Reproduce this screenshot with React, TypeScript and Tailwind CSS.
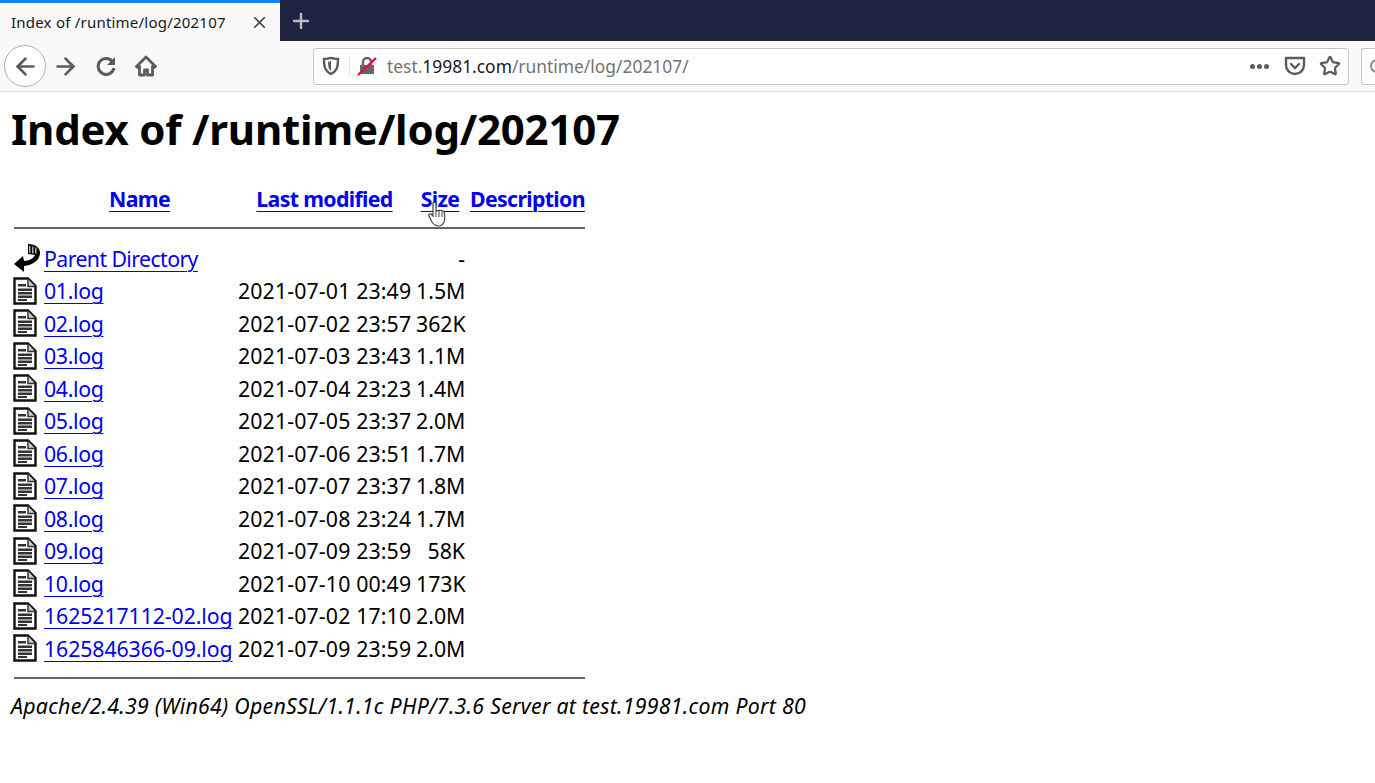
import { ArrowLeft, ArrowRight, Plus, Star, X } from "lucide-react";

const font = "[font-family:'Noto_Sans','Open_Sans',sans-serif]";

const files = [
  ["01.log", "2021-07-01 23:49", "1.5M"],
  ["02.log", "2021-07-02 23:57", "362K"],
  ["03.log", "2021-07-03 23:43", "1.1M"],
  ["04.log", "2021-07-04 23:23", "1.4M"],
  ["05.log", "2021-07-05 23:37", "2.0M"],
  ["06.log", "2021-07-06 23:51", "1.7M"],
  ["07.log", "2021-07-07 23:37", "1.8M"],
  ["08.log", "2021-07-08 23:24", "1.7M"],
  ["09.log", "2021-07-09 23:59", "58K"],
  ["10.log", "2021-07-10 00:49", "173K"],
  ["1625217112-02.log", "2021-07-02 17:10", "2.0M"],
  ["1625846366-09.log", "2021-07-09 23:59", "2.0M"],
];

function DocIcon() {
  return (
    <svg width="24" height="28" viewBox="0 0 24 28" className="-ml-[1px] block">
      <path d="M1.500 1.500H15L22.500 9V26.500H1.500Z" fill="#fff" stroke="#111" strokeWidth="2.400" />
      <path d="M15 2V9.500H22" fill="#ccc" stroke="#333" strokeWidth="1.500" />
      <path d="M5 7h8v2.500H5zM5 11.500h14v2.500H5zM5 15h14v2.500H5zM5 18.500h14v2.500H5zM5 22h9v2H5z" fill="#333" />
    </svg>
  );
}

function BackIcon() {
  return (
    <svg width="26" height="30" viewBox="0 0 26 30" className="block">
      <path
        d="M14 1C22 1 26 5 26 10C26 17 19 22 10 23L10 29L0 21L9 13L10 18C15 18 20 15 21 12L14 11Z"
        fill="#000"
      />
      <path d="M15 3h1.500v7H15zM18 3.500h1.500v7H18zM21 4.500h1.500v6H21z" fill="#aaa" />
    </svg>
  );
}

function Cursor() {
  return (
    <svg width="18" height="26" viewBox="0 0 18 26" className="absolute left-[428px] top-[201px]">
      <path
        d="M5 2c1-1 3-1 3 1v7c2-1 7-1 8 1s1 8 0 10-2 4-5 4-5-1-7-4l-3-6c-1-2 1-3 3-1l1 1z"
        fill="#fff"
        stroke="#444"
        strokeWidth="1.2"
      />
      <path d="M8 10v6M11 10v6M14 11v5" stroke="#444" strokeWidth="1" fill="none" />
    </svg>
  );
}

const headLink = "font-bold tracking-[-0.65px] text-[#0000ee] underline decoration-1 underline-offset-[4px]";
const rowLink = "text-[#0000ee] underline decoration-1 underline-offset-[4px]";

export default function App() {
  return (
    <div className={`relative h-[783px] w-[1375px] overflow-hidden bg-white text-black ${font}`}>
      {/* tab bar */}
      <div className="flex h-[41px] bg-[#202340]">
        <div className="flex w-[280px] flex-col bg-[#f9f9fa]">
          <div className="h-[3px] bg-[#0a84ff]" />
          <div className="flex flex-1 items-center justify-between pl-[11px] pr-[11px] text-[15px] tracking-[0.22px] text-[#18181a]">
            <span>Index of /runtime/log/202107</span>
            <X size={19} strokeWidth={2.2} className="text-[#444]" />
          </div>
        </div>
        <div className="flex items-center pl-[9px]">
          <Plus size={24} strokeWidth={2.4} className="text-[#b9bac6]" />
        </div>
      </div>

      {/* toolbar */}
      <div className="flex h-[51px] items-center border-b border-[#e0e0e2] bg-[#f9f9fa] pl-[4px] text-[#5b5b5e]">
        <div className="flex h-[42px] w-[42px] items-center justify-center rounded-full border border-[#b1b1b3] bg-white">
          <ArrowLeft size={27} strokeWidth={2.4} />
        </div>
        <ArrowRight size={27} strokeWidth={2.4} className="ml-[6px]" />
        <svg width="22" height="22" viewBox="0 0 22 22" className="ml-[16px]">
          <path d="M17.500 6.500A8 8 0 1 0 19 13" fill="none" stroke="currentColor" strokeWidth="3" />
          <path d="M20 2v8h-8z" fill="currentColor" />
        </svg>
        <svg width="22" height="22" viewBox="0 0 22 22" className="ml-[18px]">
          <path
            d="M11 2L1.500 11.500l1.500 1 1.500-1V20h5v-5h3v5h5v-8.500l1.500 1 1.500-1z"
            fill="none"
            stroke="currentColor"
            strokeWidth="2.800"
            strokeLinejoin="round"
          />
        </svg>

        <div className="ml-[156px] flex h-[37px] w-[1036px] items-center rounded-[3px] border border-[#c4c4c6] bg-white">
          <div className="flex w-[36px] items-center justify-center border-r border-[#e5e5e7]">
            <svg width="18" height="20" viewBox="0 0 18 20" className="-ml-[1px]">
              <path d="M2 3c4 0 5-1 7-1s3 1 7 1c0 8-1 12-7 15C3 15 2 11 2 3z" fill="none" stroke="currentColor" strokeWidth="2.400" />
              <path d="M9 5v10c-2-1-3-4-3-9z" fill="currentColor" />
            </svg>
          </div>
          <svg width="20" height="20" viewBox="0 0 20 20" className="ml-[7px]">
            <path d="M3 9h14v9H3z" fill="#666" />
            <path d="M6 9V6a4 4 0 0 1 8 0v3" fill="none" stroke="#666" strokeWidth="2.400" />
            <path d="M1 19L19 2" stroke="#ff0039" strokeWidth="2.400" />
          </svg>
          <div className="ml-[10px] flex-1 text-[17.4px] text-[#737373]">
            test.<span className="text-[#18181a]">19981.com</span>/runtime/log/202107/
          </div>
          <div className="mr-[15px] flex gap-[2px]">
            <span className="h-[5px] w-[5px] rounded-full bg-[#5b5b5e]" />
            <span className="h-[5px] w-[5px] rounded-full bg-[#5b5b5e]" />
            <span className="h-[5px] w-[5px] rounded-full bg-[#5b5b5e]" />
          </div>
          <svg width="22" height="20" viewBox="0 0 22 20">
            <path d="M2 2h18v7c0 5-4 9-9 9s-9-4-9-9z" fill="none" stroke="currentColor" strokeWidth="2.400" strokeLinejoin="round" />
            <path d="M7 8l4 4 4-4" fill="none" stroke="currentColor" strokeWidth="2.400" strokeLinecap="round" />
          </svg>
          <Star size={22} strokeWidth={2.4} className="ml-[13px] mr-[7px]" />
        </div>
        <div className="ml-[12px] flex h-[37px] flex-1 items-center overflow-hidden rounded-l-[3px] border border-r-0 border-[#c4c4c6] bg-white pl-[8px]">
          <span className="h-[14px] w-[14px] shrink-0 rounded-full border-2 border-[#8a8a8c]" />
        </div>
      </div>

      {/* directory listing */}
      <div className="px-[11px] pt-[8px]">
        <h1 className="mb-[23px] text-[42px] font-bold leading-[58px] tracking-[-0.22px]">Index of /runtime/log/202107</h1>
        <table className="w-[577px] table-fixed border-separate border-spacing-[3px] text-[21.3px] leading-[29px]">
          <colgroup>
            <col className="w-[27px]" />
            <col className="w-[191px]" />
            <col className="w-[175px]" />
            <col className="w-[51px]" />
            <col className="w-[115px]" />
          </colgroup>
          <thead>
            <tr>
              <th></th>
              <th className="pb-[3px] text-center">
                <a className={headLink}>Name</a>
              </th>
              <th className="pb-[3px] pr-[2px] text-center">
                <a className={headLink}>Last modified</a>
              </th>
              <th className="pb-[3px] pr-[3px] text-center">
                <a className={headLink}>Size</a>
              </th>
              <th className="whitespace-nowrap pb-[3px] text-left">
                <a className={headLink}>Description</a>
              </th>
            </tr>
            <tr>
              <th colSpan={5} className="pt-[8px] pb-[11px]">
                <div className="h-[2px] bg-[#666]" />
              </th>
            </tr>
          </thead>
          <tbody>
            <tr>
              <td className="h-[28.500px] align-middle">
                <BackIcon />
              </td>
              <td className="whitespace-nowrap">
                <a className={`${rowLink} tracking-[-0.6px]`}>Parent Directory</a>
              </td>
              <td></td>
              <td className="pr-[2px] text-right">-</td>
              <td></td>
            </tr>
            {files.map(([name, date, size]) => (
              <tr key={name}>
                <td className="h-[29.500px] align-middle">
                  <DocIcon />
                </td>
                <td className="whitespace-nowrap">
                  <a className={name.length > 6 ? `${rowLink} tracking-[-0.1px]` : `${rowLink} tracking-[-0.35px]`}>{name}</a>
                </td>
                <td className="whitespace-nowrap tracking-[0.13px]">{date}</td>
                <td className="whitespace-nowrap pr-[2px] text-right">{size}</td>
                <td></td>
              </tr>
            ))}
            <tr>
              <th colSpan={5} className="pt-[11px]">
                <div className="h-[2px] bg-[#666]" />
              </th>
            </tr>
          </tbody>
        </table>
        <address className="mt-[8px] text-[21.3px] italic tracking-[0.27px]">
          Apache/2.4.39 (Win64) OpenSSL/1.1.1c PHP/7.3.6 Server at test.19981.com Port 80
        </address>
      </div>
      <Cursor />
    </div>
  );
}
